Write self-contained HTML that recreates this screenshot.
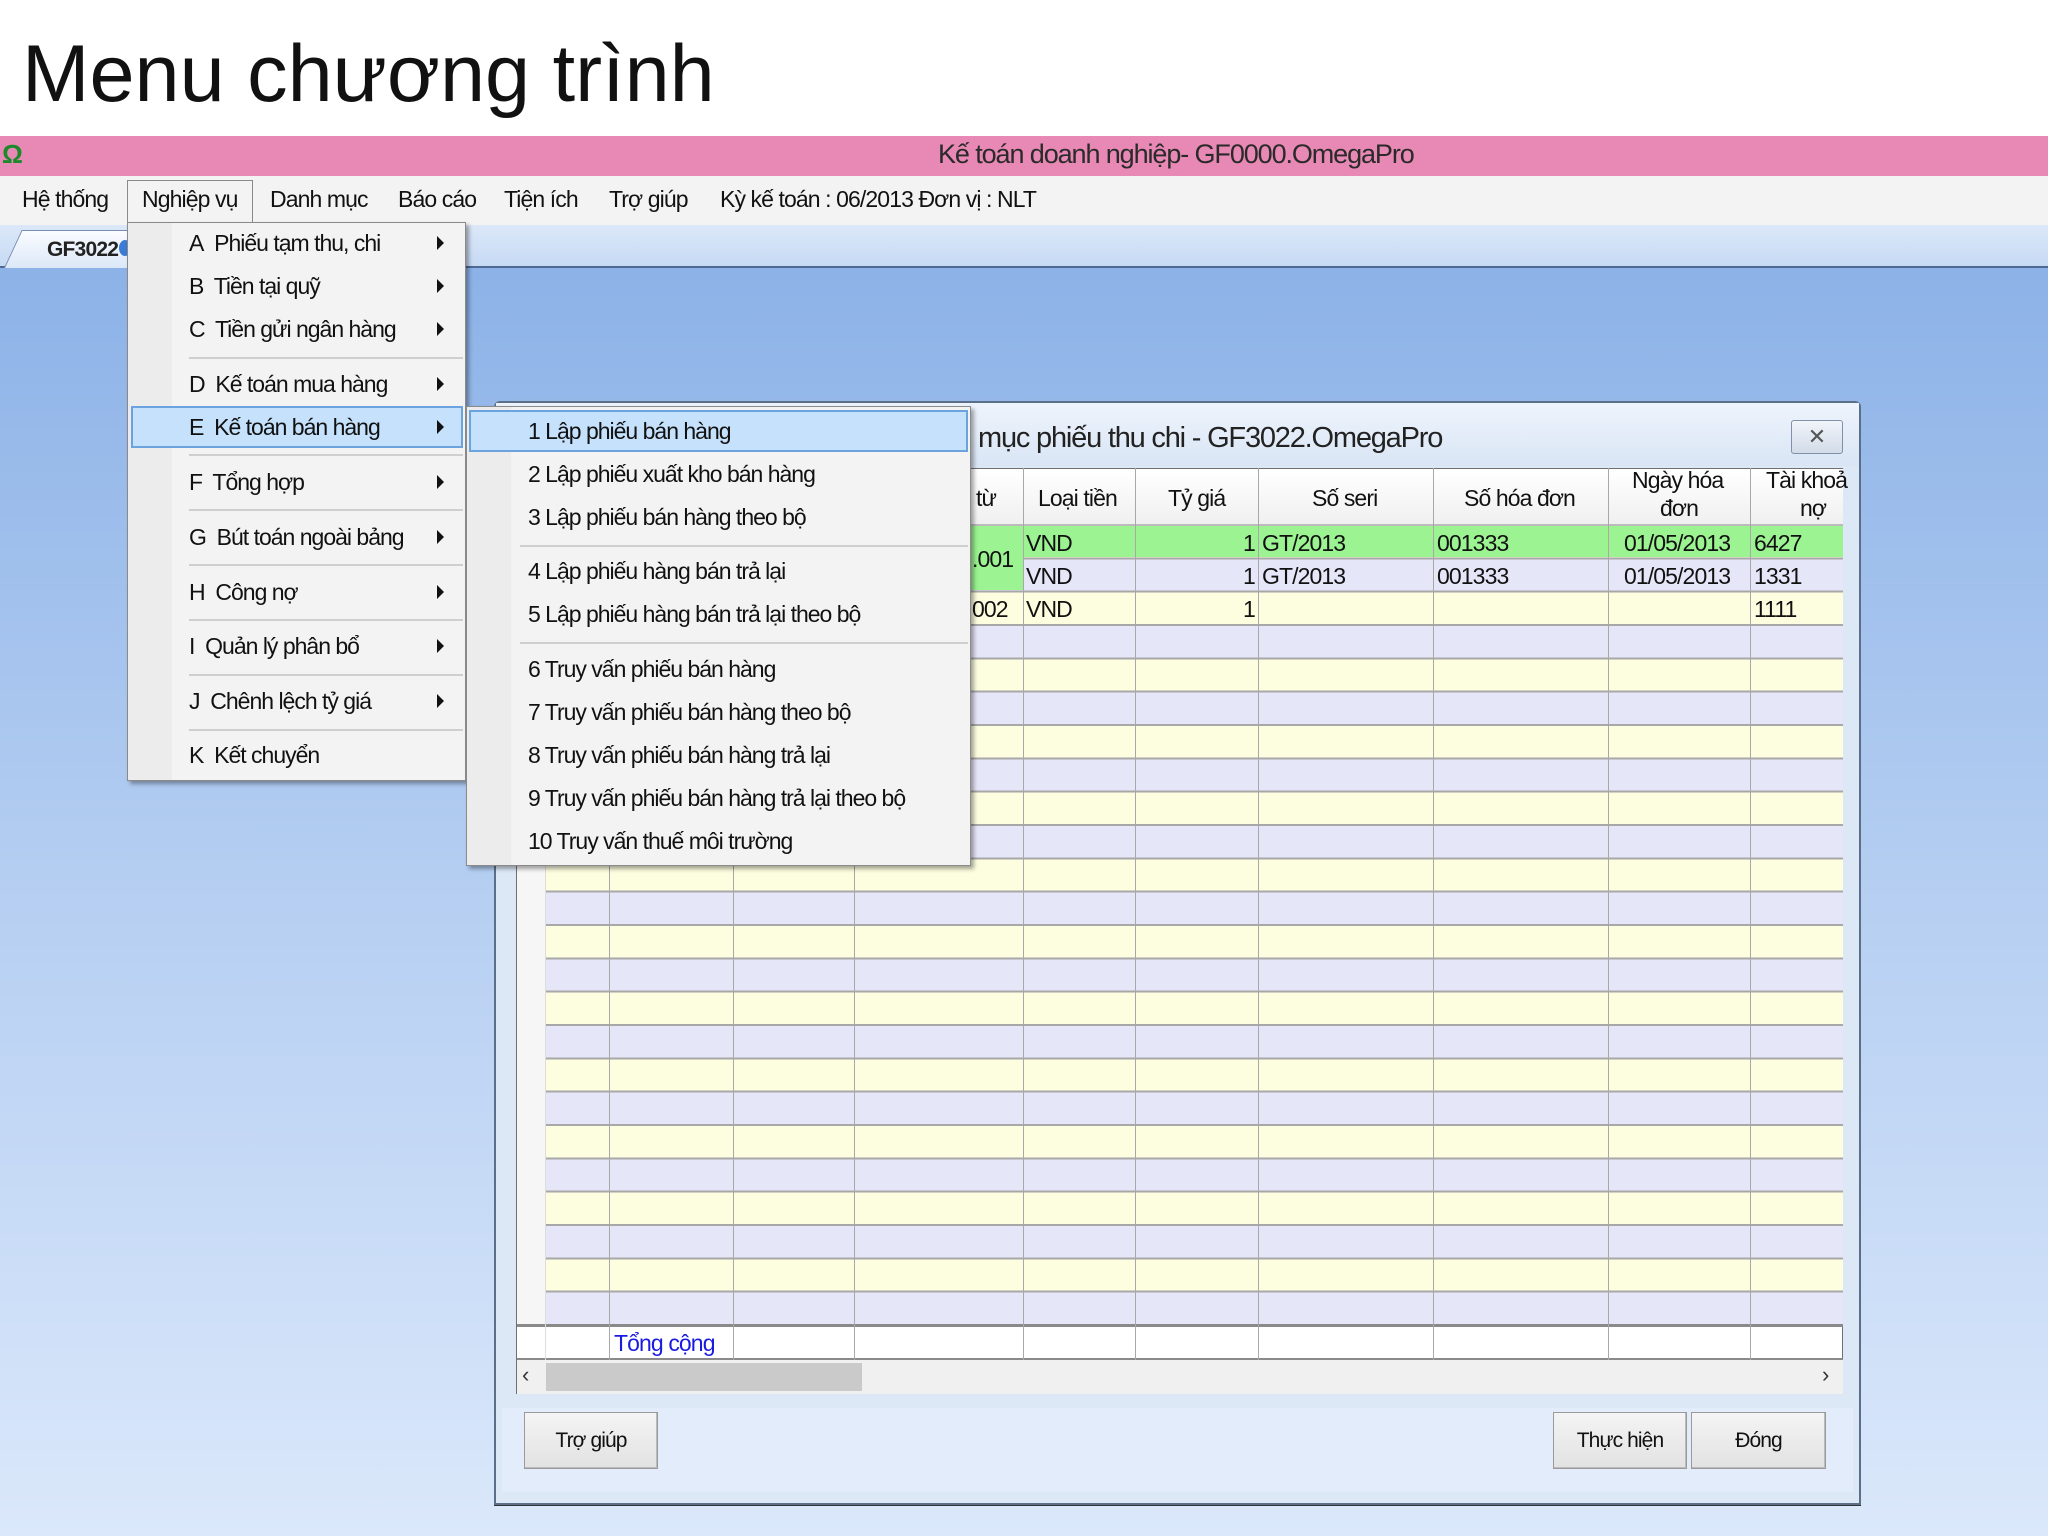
<!DOCTYPE html>
<html><head><meta charset="utf-8"><style>
*{margin:0;padding:0;box-sizing:border-box}
body{width:2048px;height:1536px;position:relative;overflow:hidden;background:#fff;font-family:"Liberation Sans","DejaVu Sans",sans-serif;color:#111}
.a{position:absolute;white-space:nowrap}
.t{font-size:23px;letter-spacing:-0.9px}
.cl{position:absolute;top:468px;height:892px;width:1px;background:#a8a8a8}
.mi{position:absolute;left:189px;font-size:23px;letter-spacing:-1px;line-height:30px}
.ar{position:absolute;left:437px;width:0;height:0;border-top:7px solid transparent;border-bottom:7px solid transparent;border-left:7px solid #111}
.sep{position:absolute;left:189px;width:274px;height:2px;background:#cfcfcf}
.si{position:absolute;left:528px;font-size:23px;letter-spacing:-1px;line-height:30px}
.ssep{position:absolute;left:520px;width:448px;height:2px;background:#cfcfcf}
.btn{position:absolute;top:1412px;height:57px;background:linear-gradient(#f4f4f4,#e2e2e2);border:1px solid #9a9a9a;box-shadow:inset -1px -1px 0 #bbb;font-size:21px;letter-spacing:-0.9px;display:flex;align-items:center;justify-content:center}
.c{position:absolute;font-size:23px;letter-spacing:-0.9px;line-height:33px}
</style></head><body>
<div class="a" style="left:22px;top:24px;font-size:81px;line-height:100px;color:#111">Menu chương trình</div>

<div class="a" style="left:0;top:268px;width:2048px;height:1268px;background:linear-gradient(#8cb2e7,#b6cff2 50%,#dbe8fb)"></div>
<div class="a" style="left:0;top:136px;width:2048px;height:40px;background:#e888b4"></div>
<div class="a" style="left:2px;top:140px;width:26px;height:30px;font-size:26px;font-weight:bold;color:#1a8a2a;line-height:28px">Ω</div>
<div class="a t" style="left:938px;top:139px;font-size:27px;color:#2a2a2a;letter-spacing:-1.1px">Kế toán doanh nghiệp- GF0000.OmegaPro</div>
<div class="a" style="left:0;top:176px;width:2048px;height:49px;background:#f3f3f3"></div>
<div class="a" style="left:127px;top:180px;width:126px;height:46px;border:1px solid #8a8a8a;border-bottom:none;background:#f3f3f3"></div>
<div class="a t" style="left:22px;top:186px">Hệ thống</div>
<div class="a t" style="left:142px;top:186px">Nghiệp vụ</div>
<div class="a t" style="left:270px;top:186px">Danh mục</div>
<div class="a t" style="left:398px;top:186px">Báo cáo</div>
<div class="a t" style="left:504px;top:186px">Tiện ích</div>
<div class="a t" style="left:609px;top:186px">Trợ giúp</div>
<div class="a t" style="left:720px;top:186px">Kỳ kế toán : 06/2013 Đơn vị : NLT</div>
<div class="a" style="left:0;top:225px;width:2048px;height:43px;background:linear-gradient(#dce8f8,#c6daf4);border-bottom:2px solid #4e6a94"></div>
<div class="a" style="left:4px;top:230px;width:130px;height:38px;background:linear-gradient(#fafcff,#dce8f8);border-top:1px solid #7a8fb0;transform:skewX(-25deg);transform-origin:bottom left;border-left:1px solid #7a8fb0"></div>
<div class="a" style="left:47px;top:238px;font-size:21px;font-weight:bold;letter-spacing:-0.8px;color:#222">GF3022</div>
<div class="a" style="left:119px;top:240px;width:12px;height:16px;border-radius:50%;background:#3a7bd5"></div>

<div class="a" style="left:494px;top:401px;width:1367px;height:1104px;background:#dde8f7;border:2px solid #5c6f88;border-radius:6px 6px 0 0;box-shadow:0 1px 0 #333"></div>
<div class="a" style="left:496px;top:403px;width:1363px;height:63px;background:linear-gradient(#eef4fc,#d9e5f5)"></div>
<div class="a" style="left:978px;top:422px;font-size:29px;letter-spacing:-1.2px;color:#222">mục phiếu thu chi - GF3022.OmegaPro</div>
<div class="a" style="left:1791px;top:420px;width:52px;height:34px;border:1px solid #8090a8;border-radius:3px;background:linear-gradient(#f2f5fa,#d2dbe8);text-align:center;font-size:22px;line-height:32px;color:#555">✕</div>
<div class="a" style="left:502px;top:1408px;width:1351px;height:84px;background:#e3ecfa"></div>

<div class="a" style="left:516px;top:468px;width:1327px;height:926px;border:1px solid #707070;background:#fff"></div>
<div class="a" style="left:517px;top:469px;width:1326px;height:57px;background:linear-gradient(#ffffff,#f0f0f0);border-bottom:2px solid #bbb"></div>
<div class="a" style="left:545px;top:526px;width:1298px;height:800px;background:repeating-linear-gradient(#fdfddf 0,#fdfddf 31.33px,#a8a8a8 31.33px,#a8a8a8 33.33px,#e6e6f9 33.33px,#e6e6f9 64.66px,#a8a8a8 64.66px,#a8a8a8 66.66px)"></div>
<div class="a" style="left:517px;top:526px;width:28px;height:800px;background:#f6f6f6"></div>
<div class="a" style="left:545px;top:526px;width:1298px;height:31px;background:#9bf391"></div>
<div class="a" style="left:854px;top:557px;width:169px;height:33px;background:#9bf391"></div>
<div class="a" style="left:517px;top:1324px;width:1326px;height:3px;background:#8a8a8a"></div>
<div class="a" style="left:517px;top:1358px;width:1326px;height:2px;background:#8a8a8a"></div>
<div class="a" style="left:517px;top:1360px;width:1326px;height:34px;background:#f0f0f0"></div>
<div class="a" style="left:546px;top:1363px;width:316px;height:28px;background:#cacaca"></div>
<div class="a" style="left:522px;top:1362px;font-size:22px;color:#333">‹</div>
<div class="a" style="left:1822px;top:1362px;font-size:22px;color:#333">›</div>

<div class="cl" style="left:545px;background:#ddd"></div>
<div class="cl" style="left:609px"></div>
<div class="cl" style="left:733px"></div>
<div class="cl" style="left:854px"></div>
<div class="cl" style="left:1023px"></div>
<div class="cl" style="left:1135px"></div>
<div class="cl" style="left:1258px"></div>
<div class="cl" style="left:1433px"></div>
<div class="cl" style="left:1608px"></div>
<div class="cl" style="left:1750px"></div>

<div class="c" style="left:976px;top:482px">từ</div>
<div class="c" style="left:1038px;top:482px">Loại tiền</div>
<div class="c" style="left:1168px;top:482px">Tỷ giá</div>
<div class="c" style="left:1312px;top:482px">Số seri</div>
<div class="c" style="left:1464px;top:482px">Số hóa đơn</div>
<div class="c" style="left:1632px;top:464px">Ngày hóa</div>
<div class="c" style="left:1660px;top:492px">đơn</div>
<div class="c" style="left:1766px;top:464px">Tài khoả</div>
<div class="c" style="left:1800px;top:492px">nợ</div>

<div class="c" style="left:972px;top:543px">.001</div>
<div class="c" style="left:1026px;top:527px">VND</div>
<div class="c" style="left:1243px;top:527px">1</div>
<div class="c" style="left:1262px;top:527px">GT/2013</div>
<div class="c" style="left:1437px;top:527px">001333</div>
<div class="c" style="left:1624px;top:527px">01/05/2013</div>
<div class="c" style="left:1754px;top:527px">6427</div>
<div class="c" style="left:1026px;top:560px">VND</div>
<div class="c" style="left:1243px;top:560px">1</div>
<div class="c" style="left:1262px;top:560px">GT/2013</div>
<div class="c" style="left:1437px;top:560px">001333</div>
<div class="c" style="left:1624px;top:560px">01/05/2013</div>
<div class="c" style="left:1754px;top:560px">1331</div>
<div class="c" style="left:972px;top:593px">002</div>
<div class="c" style="left:1026px;top:593px">VND</div>
<div class="c" style="left:1243px;top:593px">1</div>
<div class="c" style="left:1754px;top:593px">1111</div>
<div class="c" style="left:614px;top:1327px;color:#1a1ae0">Tổng cộng</div>

<div class="btn" style="left:524px;width:134px">Trợ giúp</div>
<div class="btn" style="left:1553px;width:134px">Thực hiện</div>
<div class="btn" style="left:1691px;width:135px">Đóng</div>

<div class="a" style="left:127px;top:222px;width:339px;height:559px;background:#f3f3f3;border:1px solid #8a8a8a;box-shadow:3px 3px 4px rgba(0,0,0,.35)"></div>
<div class="a" style="left:128px;top:223px;width:44px;height:557px;background:#ececec"></div>
<div class="a" style="left:131px;top:406px;width:332px;height:42px;background:#c5e1fb;border:2px solid #6aa3de"></div>
<div class="mi" style="top:228px">A&nbsp; Phiếu tạm thu, chi</div><div class="ar" style="top:236px"></div>
<div class="mi" style="top:271px">B&nbsp; Tiền tại quỹ</div><div class="ar" style="top:279px"></div>
<div class="mi" style="top:314px">C&nbsp; Tiền gửi ngân hàng</div><div class="ar" style="top:322px"></div>
<div class="sep" style="top:357px"></div>
<div class="mi" style="top:369px">D&nbsp; Kế toán mua hàng</div><div class="ar" style="top:377px"></div>
<div class="mi" style="top:412px">E&nbsp; Kế toán bán hàng</div><div class="ar" style="top:420px"></div>
<div class="sep" style="top:454px"></div>
<div class="mi" style="top:467px">F&nbsp; Tổng hợp</div><div class="ar" style="top:475px"></div>
<div class="sep" style="top:509px"></div>
<div class="mi" style="top:522px">G&nbsp; Bút toán ngoài bảng</div><div class="ar" style="top:530px"></div>
<div class="sep" style="top:564px"></div>
<div class="mi" style="top:577px">H&nbsp; Công nợ</div><div class="ar" style="top:585px"></div>
<div class="sep" style="top:619px"></div>
<div class="mi" style="top:631px">I&nbsp; Quản lý phân bổ</div><div class="ar" style="top:639px"></div>
<div class="sep" style="top:674px"></div>
<div class="mi" style="top:686px">J&nbsp; Chênh lệch tỷ giá</div><div class="ar" style="top:694px"></div>
<div class="sep" style="top:729px"></div>
<div class="mi" style="top:740px">K&nbsp; Kết chuyển</div>

<div class="a" style="left:466px;top:406px;width:505px;height:460px;background:#f3f3f3;border:1px solid #8a8a8a;box-shadow:3px 3px 4px rgba(0,0,0,.35)"></div>
<div class="a" style="left:467px;top:407px;width:44px;height:458px;background:#ececec"></div>
<div class="a" style="left:469px;top:410px;width:499px;height:42px;background:#c5e1fb;border:2px solid #6aa3de"></div>
<div class="si" style="top:416px">1 Lập phiếu bán hàng</div>
<div class="si" style="top:459px">2 Lập phiếu xuất kho bán hàng</div>
<div class="si" style="top:502px">3 Lập phiếu bán hàng theo bộ</div>
<div class="ssep" style="top:545px"></div>
<div class="si" style="top:556px">4 Lập phiếu hàng bán trả lại</div>
<div class="si" style="top:599px">5 Lập phiếu hàng bán trả lại theo bộ</div>
<div class="ssep" style="top:642px"></div>
<div class="si" style="top:654px">6 Truy vấn phiếu bán hàng</div>
<div class="si" style="top:697px">7 Truy vấn phiếu bán hàng theo bộ</div>
<div class="si" style="top:740px">8 Truy vấn phiếu bán hàng trả lại</div>
<div class="si" style="top:783px">9 Truy vấn phiếu bán hàng trả lại theo bộ</div>
<div class="si" style="top:826px">10 Truy vấn thuế môi trường</div>
</body></html>
